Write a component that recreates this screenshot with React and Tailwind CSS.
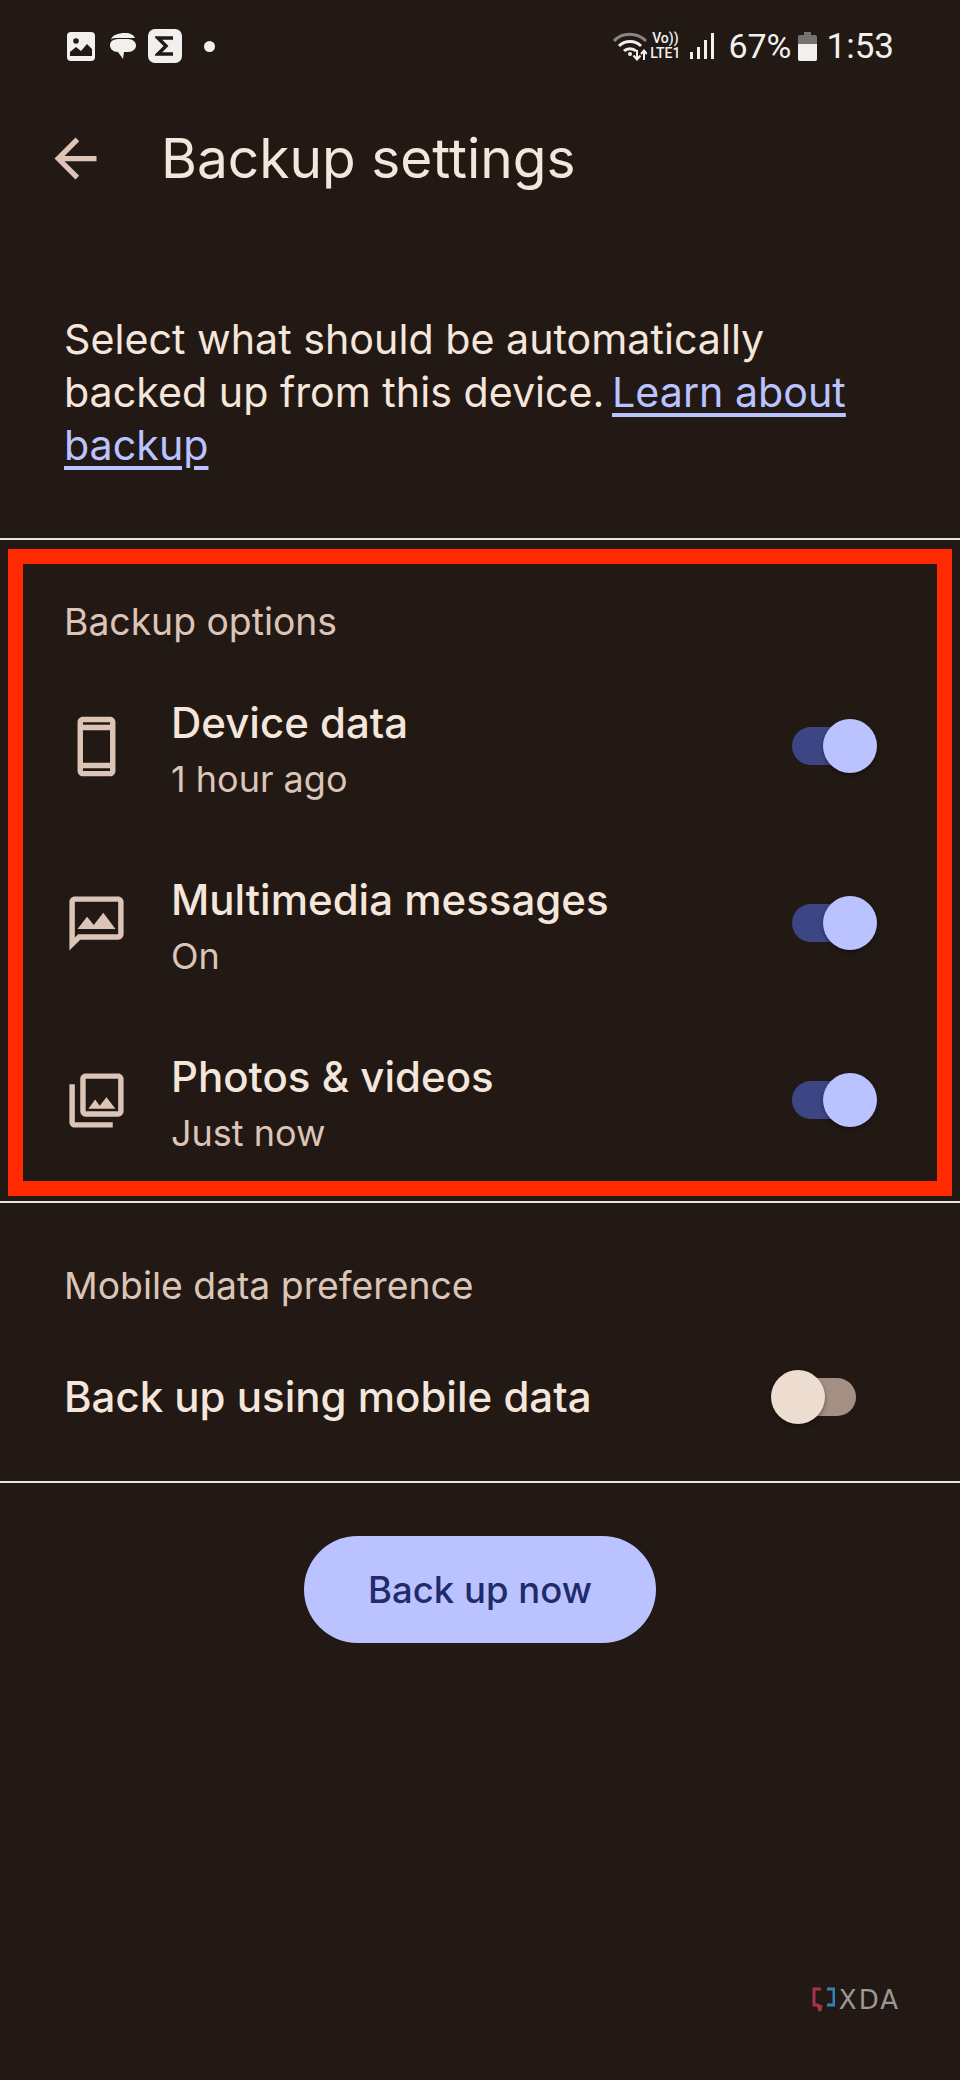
import React from "react";

function Toggle({ on }) {
  if (on) {
    return (
      <div className="flex items-center">
        <div className="w-[65px] h-[38px] rounded-full bg-[#3d4685]" />
        <div className="w-[54px] h-[54px] -ml-[34px] rounded-full bg-[#bac3ff] shadow-[0_2px_4px_rgba(0,0,0,0.4)]" />
      </div>
    );
  }
  return (
    <div className="flex items-center">
      <div className="relative z-10 w-[54px] h-[54px] rounded-full bg-[#eddcd0] shadow-[0_2px_4px_rgba(0,0,0,0.4)]" />
      <div className="w-[65px] h-[38px] -ml-[34px] rounded-full bg-[#a39082]" />
    </div>
  );
}

function Icon({ d }) {
  return (
    <svg width="65" height="65" viewBox="0 0 24 24" fill="#dcc5b6">
      <path d={d} fillRule="evenodd" />
    </svg>
  );
}

const phonePath =
  "M17 1.01L7 1c-1.1 0-2 .9-2 2v18c0 1.1.9 2 2 2h10c1.1 0 2-.9 2-2V3c0-1.1-.9-1.99-2-1.99zM17 21H7v-1h10v1zm0-3H7V6h10v12zm0-14H7V3h10v1z";
const mmsPath =
  "M20 2H4c-1.1 0-2 .9-2 2v18l4-4h14c1.1 0 2-.9 2-2V4c0-1.1-.9-2-2-2zm0 14H5.17L4 17.17V4h16v12zM5 14l3.5-4.5 2.5 3.01L14.5 8l4.5 6z";
const photosPath =
  "M20 4v12H8V4h12m0-2H8c-1.1 0-2 .9-2 2v12c0 1.1.9 2 2 2h12c1.1 0 2-.9 2-2V4c0-1.1-.9-2-2-2zm-8.5 9.67l1.69 2.26 2.48-3.1L19 15H9zM2 6v14c0 1.1.9 2 2 2h14v-2H4V6H2z";

function OptionRow({ icon, title, sub }) {
  return (
    <div className="h-[160px] flex items-center pl-[41px] pr-[60px]">
      <div className="w-[107px] shrink-0 flex">
        <Icon d={icon} />
      </div>
      <div className="flex-1 pt-[9px]">
        <div className="text-[42px] leading-[50px] font-medium text-[#f5e6dc]">{title}</div>
        <div className="mt-[6px] text-[36px] leading-[50px] text-[#dcc5b6]">{sub}</div>
      </div>
      <Toggle on />
    </div>
  );
}

function StatusBar() {
  return (
    <div className="h-[92px] flex items-center justify-between pl-[67px] pr-[66px] font-['Roboto',sans-serif] text-[#f2f0ee]">
      <div className="flex items-center">
        <svg width="28" height="29" viewBox="0 0 28 29">
          <rect width="28" height="29" rx="4" fill="#f2f0ee" />
          <circle cx="9" cy="9" r="2.8" fill="#211915" />
          <path d="M3 24v-4l6-5 5 4 6-7 5 5v7z" fill="#211915" />
        </svg>
        <svg className="ml-[14px]" width="28" height="28" viewBox="0 0 28 28">
          <path d="M2 8C3 3 9 1 16 1c5 0 9 2 10 5H10C6 6 3 6 2 8z" fill="#f2f0ee" />
          <path d="M1 13c0-4 4-6 9-6h9c5 0 8 3 8 6.500s-3 6.500-8 6.500h-4l-1 7-5-7C4 20 1 17 1 13z" fill="#f2f0ee" />
        </svg>
        <div className="ml-[11px] w-[34px] h-[34px] rounded-[7px] bg-[#f2f0ee] flex items-center justify-center">
          <svg width="20" height="22" viewBox="0 0 20 22">
            <path d="M18 3H3l8 8-8 8h15" fill="none" stroke="#211915" strokeWidth="3.500" />
          </svg>
        </div>
        <div className="ml-[22px] w-[11px] h-[11px] rounded-full bg-[#f2f0ee]" />
      </div>
      <div className="flex items-center">
        <svg width="34" height="30" viewBox="0 0 34 30">
          <path d="M1 10C9 1 24 1 33 10" fill="none" stroke="#8a8582" strokeWidth="3" />
          <path d="M6 15c6-6 16-6 22 0M11 20c3-3 9-3 12 0" fill="none" stroke="#f2f0ee" strokeWidth="3" />
          <circle cx="17" cy="23" r="2" fill="#f2f0ee" />
          <path d="M24 19v9M20.500 24.500l3.500 4 3.500-4M31 29v-9M28 23l3-3.500 3 3.500" fill="none" stroke="#f2f0ee" strokeWidth="2" />
        </svg>
        <div className="ml-[1px] w-[34px] flex flex-col items-center leading-none">
          <span className="text-[14px] leading-[15px] font-medium">Vo))</span>
          <span className="text-[14px] leading-[15px] font-medium">LTE1</span>
        </div>
        <svg className="ml-[8px]" width="25" height="28" viewBox="0 0 25 28">
          <rect x="0" y="20" width="3" height="7" fill="#f2f0ee" />
          <rect x="7" y="15" width="3" height="12" fill="#f2f0ee" />
          <rect x="14" y="8" width="3" height="19" fill="#f2f0ee" />
          <rect x="21" y="1" width="3" height="26" fill="#f2f0ee" />
        </svg>
        <span className="ml-[13px] text-[34px] leading-none">67%</span>
        <svg className="ml-[6px]" width="19" height="29" viewBox="0 0 19 29">
          <path d="M6 0h7v3h4a2 2 0 0 1 2 2v22a2 2 0 0 1-2 2H2a2 2 0 0 1-2-2V5a2 2 0 0 1 2-2h4z" fill="#77726f" />
          <path d="M0 12h19v15a2 2 0 0 1-2 2H2a2 2 0 0 1-2-2z" fill="#f2f0ee" />
        </svg>
        <span className="ml-[10px] text-[35px] leading-none">1:53</span>
      </div>
    </div>
  );
}

function Divider() {
  return <div className="h-[2px] bg-[#e6e3e0]" />;
}

export default function App() {
  return (
    <div className="w-[960px] h-[2080px] bg-[#221915] flex flex-col font-['Inter',sans-serif] overflow-hidden">
      <StatusBar />

      {/* Header */}
      <div className="h-[132px] flex items-center pl-[44px]">
        <svg width="63" height="63" viewBox="0 0 24 24" fill="#dcc5b6">
          <path d="M20 11H7.830l5.590-5.590L12 4l-8 8 8 8 1.410-1.410L7.830 13H20v-2z" />
        </svg>
        <h1 className="ml-[54px] text-[55px] text-[#f5e6dc]">Backup settings</h1>
      </div>

      <p className="mt-[89px] pl-[64px] text-[41.200px] leading-[53px] text-[#f5e6dc] whitespace-nowrap">
        Select what should be automatically
        <br />
        backed up from this device.{" "}
        <span className="-ml-[4px] text-[#bac3ff] underline underline-offset-[6px]">Learn about</span>
        <br />
        <span className="text-[#bac3ff] underline underline-offset-[6px]">backup</span>
      </p>

      <div className="mt-[66px]">
        <Divider />
      </div>

      {/* Backup options */}
      <div className="mt-[9px] mx-[8px] h-[647px] border-[15px] border-[#ff2a00]">
        <div className="pt-[36px] pb-[22px] pl-[41px] text-[37.300px] leading-[44px] text-[#dcc5b6]">
          Backup options
        </div>
        <div className="flex flex-col gap-[17px]">
          <OptionRow icon={phonePath} title="Device data" sub="1 hour ago" />
          <OptionRow icon={mmsPath} title="Multimedia messages" sub="On" />
          <OptionRow icon={photosPath} title="Photos & videos" sub="Just now" />
        </div>
      </div>

      <div className="mt-[5px]">
        <Divider />
      </div>

      {/* Mobile data */}
      <div className="h-[278px] pl-[64px] flex flex-col">
        <div className="mt-[61px] text-[37.300px] leading-[44px] text-[#dcc5b6]">Mobile data preference</div>
        <div className="mt-[62px] flex items-center justify-between pr-[104px]">
          <span className="text-[42px] leading-[50px] font-medium text-[#f5e6dc]">Back up using mobile data</span>
          <Toggle on={false} />
        </div>
      </div>

      <Divider />

      <div className="mt-[53px] flex justify-center">
        <button className="w-[352px] h-[107px] pt-[2px] rounded-full bg-[#bac3ff] text-[36.500px] font-medium text-[#1f2b6b]">
          Back up now
        </button>
      </div>

      {/* XDA mark */}
      <div className="mt-[344px] pr-[60px] flex justify-end items-center">
        <svg width="23" height="26" viewBox="0 0 23 26">
          <path d="M9 2H2v16h4l2 6 1-6" fill="none" stroke="#a6324a" strokeWidth="3" />
          <path d="M15 2h7v16h-7" fill="none" stroke="#2f83b5" strokeWidth="3" />
        </svg>
        <span className="ml-[4px] font-['DejaVu_Sans',sans-serif] text-[26px] leading-none tracking-[2px] text-[#9b9896]">XDA</span>
      </div>
    </div>
  );
}
